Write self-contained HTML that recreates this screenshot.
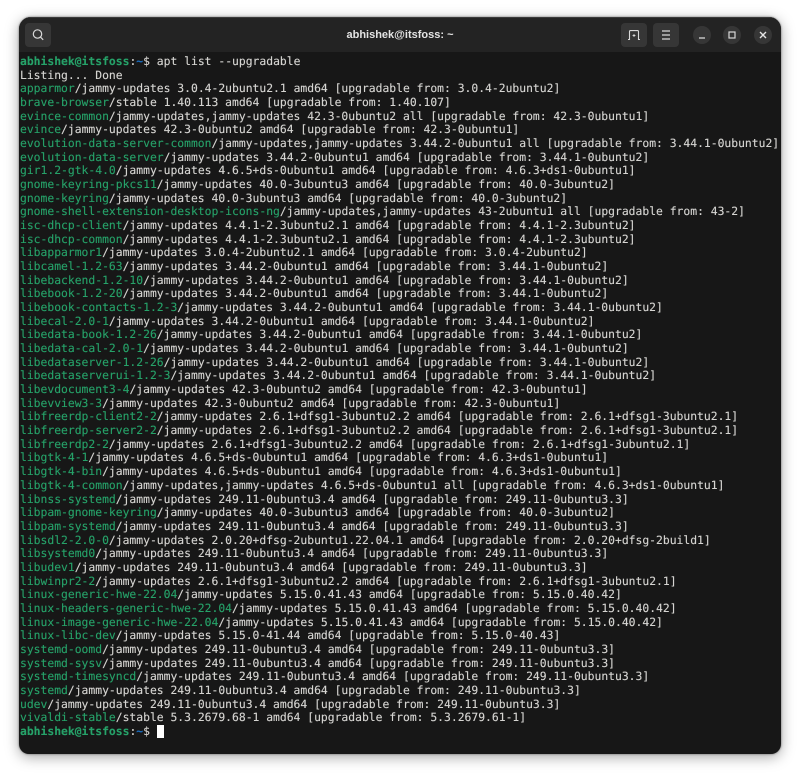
<!DOCTYPE html>
<html>
<head>
<meta charset="utf-8">
<style>
html,body{margin:0;padding:0;width:800px;height:776px;background:#fff;overflow:hidden}
#win{position:absolute;left:19px;top:17px;width:762px;height:737px;background:#171717;border-radius:12px 12px 10px 10px;box-shadow:0 3px 14px rgba(0,0,0,.35),0 0 2px rgba(0,0,0,.5);overflow:hidden}
#hd{position:absolute;left:0;top:0;width:762px;height:35px;background:#232323;border-top:1px solid #3a3a3a;box-sizing:border-box}
.btn{position:absolute;top:23px;width:26px;height:24px;background:#363636;border-radius:4px}
.cir{position:absolute;top:26px;width:18px;height:18px;background:#363636;border-radius:50%}
#title{position:absolute;left:0;top:27px;width:800px;text-align:center;color:#e4e4e4;font:bold 11px/16px "Liberation Sans","DejaVu Sans",sans-serif}
#term{position:absolute;left:20px;top:55px;margin:0;font-family:"DejaVu Sans Mono","Liberation Mono",monospace;font-size:11.36px;line-height:13.673px;color:#d6d5d2;white-space:pre;text-rendering:geometricPrecision;-webkit-text-stroke:.12px currentColor;filter:blur(.2px)}
#term i{font-style:normal;color:#26a269}
#term b{color:#26a269}
#term u{text-decoration:none;font-weight:bold;color:#1a6fc4}
#cur{position:absolute;left:157px;top:725px;width:7px;height:13px;background:#fff}
svg{position:absolute}
</style>
</head>
<body>
<div id="win"><div id="hd"></div></div>
<div class="btn" style="left:25px"></div>
<svg style="left:25px;top:23px" width="26" height="24" fill="none" stroke="#d8d8d8" stroke-width="1.2"><circle cx="12.5" cy="11" r="4.2"/><path d="M15.6 14.2l2.6 2.6"/></svg>
<div id="title">abhishek@itsfoss: ~</div>
<div class="btn" style="left:621px"></div>
<svg style="left:621px;top:23px" width="26" height="24" fill="none" stroke="#d8d8d8" stroke-width="1.1"><path d="M7 16.5h1.5V8.6q0-1 1-1h7q1 0 1 1v7.9H19"/><path d="M11.6 12.5h2.8M13 11.1v2.8" stroke-width="1"/></svg>
<div class="btn" style="left:653px"></div>
<svg style="left:653px;top:23px" width="26" height="24" fill="none" stroke="#d8d8d8" stroke-width="1.2"><path d="M9 8h8M9 12h8M9 16h8"/></svg>
<div class="cir" style="left:693px"></div>
<svg style="left:693px;top:26px" width="18" height="18" fill="none" stroke="#d8d8d8" stroke-width="1.3"><path d="M6 12h6"/></svg>
<div class="cir" style="left:723px"></div>
<svg style="left:723px;top:26px" width="18" height="18" fill="none" stroke="#d8d8d8" stroke-width="1.2"><rect x="6" y="6" width="6" height="6"/></svg>
<div class="cir" style="left:754px"></div>
<svg style="left:754px;top:26px" width="18" height="18" fill="none" stroke="#e4e4e4" stroke-width="1.4"><path d="M6 6l6 6M12 6l-6 6"/></svg>
<pre id="term"><b>abhishek@itsfoss</b>:<u>~</u>$ apt list --upgradable
Listing... Done
<i>apparmor</i>/jammy-updates 3.0.4-2ubuntu2.1 amd64 [upgradable from: 3.0.4-2ubuntu2]
<i>brave-browser</i>/stable 1.40.113 amd64 [upgradable from: 1.40.107]
<i>evince-common</i>/jammy-updates,jammy-updates 42.3-0ubuntu2 all [upgradable from: 42.3-0ubuntu1]
<i>evince</i>/jammy-updates 42.3-0ubuntu2 amd64 [upgradable from: 42.3-0ubuntu1]
<i>evolution-data-server-common</i>/jammy-updates,jammy-updates 3.44.2-0ubuntu1 all [upgradable from: 3.44.1-0ubuntu2]
<i>evolution-data-server</i>/jammy-updates 3.44.2-0ubuntu1 amd64 [upgradable from: 3.44.1-0ubuntu2]
<i>gir1.2-gtk-4.0</i>/jammy-updates 4.6.5+ds-0ubuntu1 amd64 [upgradable from: 4.6.3+ds1-0ubuntu1]
<i>gnome-keyring-pkcs11</i>/jammy-updates 40.0-3ubuntu3 amd64 [upgradable from: 40.0-3ubuntu2]
<i>gnome-keyring</i>/jammy-updates 40.0-3ubuntu3 amd64 [upgradable from: 40.0-3ubuntu2]
<i>gnome-shell-extension-desktop-icons-ng</i>/jammy-updates,jammy-updates 43-2ubuntu1 all [upgradable from: 43-2]
<i>isc-dhcp-client</i>/jammy-updates 4.4.1-2.3ubuntu2.1 amd64 [upgradable from: 4.4.1-2.3ubuntu2]
<i>isc-dhcp-common</i>/jammy-updates 4.4.1-2.3ubuntu2.1 amd64 [upgradable from: 4.4.1-2.3ubuntu2]
<i>libapparmor1</i>/jammy-updates 3.0.4-2ubuntu2.1 amd64 [upgradable from: 3.0.4-2ubuntu2]
<i>libcamel-1.2-63</i>/jammy-updates 3.44.2-0ubuntu1 amd64 [upgradable from: 3.44.1-0ubuntu2]
<i>libebackend-1.2-10</i>/jammy-updates 3.44.2-0ubuntu1 amd64 [upgradable from: 3.44.1-0ubuntu2]
<i>libebook-1.2-20</i>/jammy-updates 3.44.2-0ubuntu1 amd64 [upgradable from: 3.44.1-0ubuntu2]
<i>libebook-contacts-1.2-3</i>/jammy-updates 3.44.2-0ubuntu1 amd64 [upgradable from: 3.44.1-0ubuntu2]
<i>libecal-2.0-1</i>/jammy-updates 3.44.2-0ubuntu1 amd64 [upgradable from: 3.44.1-0ubuntu2]
<i>libedata-book-1.2-26</i>/jammy-updates 3.44.2-0ubuntu1 amd64 [upgradable from: 3.44.1-0ubuntu2]
<i>libedata-cal-2.0-1</i>/jammy-updates 3.44.2-0ubuntu1 amd64 [upgradable from: 3.44.1-0ubuntu2]
<i>libedataserver-1.2-26</i>/jammy-updates 3.44.2-0ubuntu1 amd64 [upgradable from: 3.44.1-0ubuntu2]
<i>libedataserverui-1.2-3</i>/jammy-updates 3.44.2-0ubuntu1 amd64 [upgradable from: 3.44.1-0ubuntu2]
<i>libevdocument3-4</i>/jammy-updates 42.3-0ubuntu2 amd64 [upgradable from: 42.3-0ubuntu1]
<i>libevview3-3</i>/jammy-updates 42.3-0ubuntu2 amd64 [upgradable from: 42.3-0ubuntu1]
<i>libfreerdp-client2-2</i>/jammy-updates 2.6.1+dfsg1-3ubuntu2.2 amd64 [upgradable from: 2.6.1+dfsg1-3ubuntu2.1]
<i>libfreerdp-server2-2</i>/jammy-updates 2.6.1+dfsg1-3ubuntu2.2 amd64 [upgradable from: 2.6.1+dfsg1-3ubuntu2.1]
<i>libfreerdp2-2</i>/jammy-updates 2.6.1+dfsg1-3ubuntu2.2 amd64 [upgradable from: 2.6.1+dfsg1-3ubuntu2.1]
<i>libgtk-4-1</i>/jammy-updates 4.6.5+ds-0ubuntu1 amd64 [upgradable from: 4.6.3+ds1-0ubuntu1]
<i>libgtk-4-bin</i>/jammy-updates 4.6.5+ds-0ubuntu1 amd64 [upgradable from: 4.6.3+ds1-0ubuntu1]
<i>libgtk-4-common</i>/jammy-updates,jammy-updates 4.6.5+ds-0ubuntu1 all [upgradable from: 4.6.3+ds1-0ubuntu1]
<i>libnss-systemd</i>/jammy-updates 249.11-0ubuntu3.4 amd64 [upgradable from: 249.11-0ubuntu3.3]
<i>libpam-gnome-keyring</i>/jammy-updates 40.0-3ubuntu3 amd64 [upgradable from: 40.0-3ubuntu2]
<i>libpam-systemd</i>/jammy-updates 249.11-0ubuntu3.4 amd64 [upgradable from: 249.11-0ubuntu3.3]
<i>libsdl2-2.0-0</i>/jammy-updates 2.0.20+dfsg-2ubuntu1.22.04.1 amd64 [upgradable from: 2.0.20+dfsg-2build1]
<i>libsystemd0</i>/jammy-updates 249.11-0ubuntu3.4 amd64 [upgradable from: 249.11-0ubuntu3.3]
<i>libudev1</i>/jammy-updates 249.11-0ubuntu3.4 amd64 [upgradable from: 249.11-0ubuntu3.3]
<i>libwinpr2-2</i>/jammy-updates 2.6.1+dfsg1-3ubuntu2.2 amd64 [upgradable from: 2.6.1+dfsg1-3ubuntu2.1]
<i>linux-generic-hwe-22.04</i>/jammy-updates 5.15.0.41.43 amd64 [upgradable from: 5.15.0.40.42]
<i>linux-headers-generic-hwe-22.04</i>/jammy-updates 5.15.0.41.43 amd64 [upgradable from: 5.15.0.40.42]
<i>linux-image-generic-hwe-22.04</i>/jammy-updates 5.15.0.41.43 amd64 [upgradable from: 5.15.0.40.42]
<i>linux-libc-dev</i>/jammy-updates 5.15.0-41.44 amd64 [upgradable from: 5.15.0-40.43]
<i>systemd-oomd</i>/jammy-updates 249.11-0ubuntu3.4 amd64 [upgradable from: 249.11-0ubuntu3.3]
<i>systemd-sysv</i>/jammy-updates 249.11-0ubuntu3.4 amd64 [upgradable from: 249.11-0ubuntu3.3]
<i>systemd-timesyncd</i>/jammy-updates 249.11-0ubuntu3.4 amd64 [upgradable from: 249.11-0ubuntu3.3]
<i>systemd</i>/jammy-updates 249.11-0ubuntu3.4 amd64 [upgradable from: 249.11-0ubuntu3.3]
<i>udev</i>/jammy-updates 249.11-0ubuntu3.4 amd64 [upgradable from: 249.11-0ubuntu3.3]
<i>vivaldi-stable</i>/stable 5.3.2679.68-1 amd64 [upgradable from: 5.3.2679.61-1]
<b>abhishek@itsfoss</b>:<u>~</u>$ </pre>
<div id="cur"></div>
</body>
</html>
